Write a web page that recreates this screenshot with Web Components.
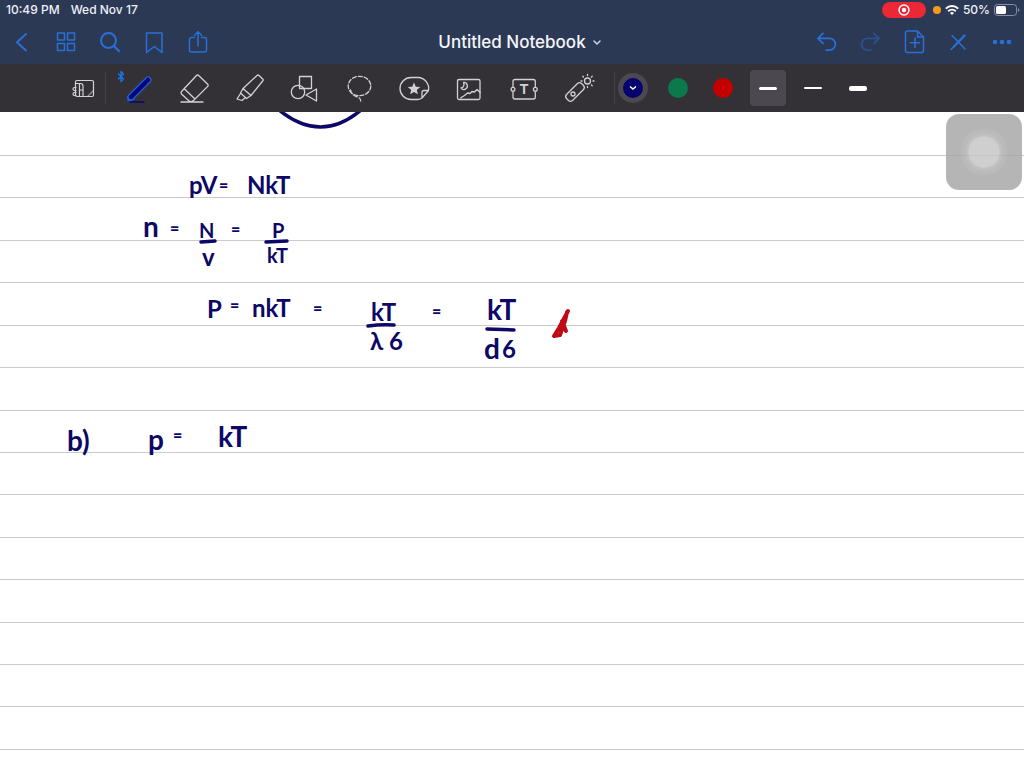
<!DOCTYPE html>
<html lang="en">
<head>
<meta charset="utf-8">
<meta name="viewport" content="width=device-width, initial-scale=1">
<title>Untitled Notebook</title>
<style>
    :root {
        --nav-color: #2c3955;
        --tint-color: #2870d8;
        --tools-color: #333136;
        --tools-selected: #4b494f;
        --ink-color: #0d0867;
    }
    body {
        margin: 0;
        font-family: Inter, "Liberation Sans", sans-serif;
    }
</style>
</head>
<body>
<notebook-app></notebook-app>

<script>
// every icon is drawn on a 44x44 grid
const icons = {
    back: '<path d="M26 14l-9 8.3 9 8.2"/>',
    grid: '<path d="M13.5 13h7v7h-7zM23.5 13h7v7h-7zM13.5 23.5h7v7h-7zM23.5 23.5h7v7h-7z"/>',
    search: '<circle cx="20.5" cy="20.5" r="7.5"/><path d="M26 26l5 5" stroke-width="2.2"/>',
    bookmark: '<path d="M14.5 13h15.5v19.5l-7.700-6-7.800 6z"/>',
    share: '<path d="M18.5 17.5h-3a2 2 0 0 0-2 2v10.500a2 2 0 0 0 2 2h13a2 2 0 0 0 2-2V19.500a2 2 0 0 0-2-2h-3M22 26V12M18.500 15.300L22 11.800l3.500 3.500"/>',
    undo: '<path d="M19 13.300l-5 5 5 5M14 18.300h11.500a5.900 5.900 0 0 1 0 11.800H22"/>',
    redo: '<path d="M26 13.300l5 5-5 5M31 18.300H19.500a5.900 5.900 0 0 0 0 11.800H23"/>',
    addpage: '<path d="M15.5 11h10l6 6v13.500a2 2 0 0 1-2 2h-14a2 2 0 0 1-2-2V13a2 2 0 0 1 2-2zM25.500 11v6h6M23 18v9.500M18.300 22.700h9.400"/>',
    pencross: '<path d="M16 15.500l13 13.500"/><path d="M18 26.500L28.500 15.500" stroke-width="2.4"/><path d="M15 29.500l3-3"/>',
    more: '<g fill="currentColor" stroke="none"><circle cx="15" cy="22" r="2.3"/><circle cx="22" cy="22" r="2.3"/><circle cx="29" cy="22" r="2.3"/></g>',
    readonly: '<rect x="14.5" y="14.500" width="18" height="16" rx="1.5"/><path d="M15 17.500h4.500a2.500 2.500 0 0 1 2.500 2.500v10.500M18.500 18v12M18.500 24H22"/><path d="M32 25l-5.500 5.500" opacity=".6"/><path d="M15 21.500h-1.500a1.500 1.500 0 0 0 0 3H15M15 26.500h-1.500a1.500 1.500 0 0 0 0 3H15"/>',
    pen: '<path d="M14.5 31.500L32 14" stroke="#1c5fd8" stroke-width="7"/><path d="M12 35l2-6 4 4z" fill="#1c5fd8" stroke="#1c5fd8"/><path d="M15 31L29.500 16.500M31.500 14.500l.5-.5" stroke="#090477" stroke-width="4.500"/><path d="M14 36h14" stroke="#090477"/><path d="M2.500 8l5 5-2.500 2.500v-10L7.500 8l-5 5" stroke="#1579ef"/>',
    eraser: '<path d="M25.500 9.500a1.500 1.500 0 0 1 2.200 0l9 8.700a1.500 1.500 0 0 1 0 2.200L23 34a4 4 0 0 1-5.500.5l-7-6.500a2 2 0 0 1 0-2.500zM13 22.500L24 33M10 36h22"/>',
    marker: '<path d="M31 9.500a1.500 1.500 0 0 1 2 0l3.700 3.500a1.500 1.500 0 0 1 0 2L25 29.500l-8-7zM17 22.500l-2.500 4.500 6 5.500 4.500-3M14.500 27.500l-3.500 5.500 5 1.500 3.500-3"/>',
    shapes: '<rect x="18.5" y="10.500" width="12" height="12"/><circle cx="17" cy="26" r="6.7"/><path d="M25 29l10.500-6v12z"/>',
    lasso: '<ellipse cx="23.5" cy="20" rx="11.3" ry="9.7" stroke-dasharray="4 2"/><path d="M14.500 24c1 5 4.500 6 7 7s3 2 3.200 4" stroke-dasharray="4 2"/>',
    sticker: '<path d="M20 11.500h7a11 11 0 0 1 10.500 13l-6.500 7.500a9 9 0 0 1-4 1.500h-7a11 11 0 0 1 0-22zM31 32v-5.500a2 2 0 0 1 2-2h4.500"/><path d="M23 16.500l1.800 4.200 4.400.3-3.400 2.900 1.100 4.300-3.900-2.300-3.900 2.300 1.100-4.300-3.400-2.900 4.400-.3z" fill="currentColor" stroke="none"/>',
    image: '<rect x="11.5" y="13.500" width="22.5" height="20" rx="1.5"/><path d="M17.500 16.500a3.500 3.500 0 1 1-2.500 5.500 3.700 3.700 0 0 0 2.500-5.500zM14.500 32l4-2.500 3-2.500 2.500.5 2-2 2.500.5 2.500-2.500 3.200 3"/>',
    text: '<path d="M12 20.500v-5a2 2 0 0 1 2-2h18.300a2 2 0 0 1 2 2v5M12 26v5a2 2 0 0 0 2 2h18.300a2 2 0 0 0 2-2v-5"/><circle cx="12" cy="23.3" r="1.9"/><circle cx="34.3" cy="23.3" r="1.9"/><text x="23" y="28" font-size="14" font-weight="700" text-anchor="middle" fill="currentColor" stroke="none">T</text>',
    laser: '<path d="M10.500 28.500L21.500 17.500a3 3 0 0 1 4 0l2 2a3 3 0 0 1 0 4L16.500 34.500a3 3 0 0 1-4 0l-2-2a3 3 0 0 1 0-4z"/><circle cx="17" cy="28" r="2"/><circle cx="31.5" cy="15" r="3"/><path d="M31.500 9.500v-1M31.500 21.500v-1M26 15h-1M38 15h-1M27.500 11l-.7-.7M35.500 19l.7.7M35.500 11l.7-.7"/>'
}

class NotebookIcon extends HTMLElement {
    constructor() {
        super()
        this.attachShadow({ mode: 'open' })
    }

    connectedCallback() {
        this.shadowRoot.innerHTML = `
            <style>
                :host { display: block; width: 44px; height: 44px; }
                svg { display: block; fill: none; stroke: currentColor; stroke-linecap: round; stroke-linejoin: round; }
            </style>
            <svg width="44" height="44" viewBox="0 0 44 44" stroke-width="${this.getAttribute('weight') || 1.5}" aria-hidden="true">${icons[this.getAttribute('name')]}</svg>
        `
    }
}

class StatusBar extends HTMLElement {
    constructor() {
        super()
        this.attachShadow({ mode: 'open' }).innerHTML = `
            <style>
                :host {
                    display: flex;
                    justify-content: space-between;
                    align-items: center;
                    height: 20px;
                    padding: 0 4px 0 6px;
                    color: #eef1f8;
                    font-size: 12px;
                    font-weight: 500;
                    line-height: 20px;
                }
                div { display: flex; align-items: center; }
                .left { gap: 11px; }
                .right { gap: 4px; }
                svg { display: block; }
                .rec {
                    width: 44px;
                    height: 16px;
                    border-radius: 8px;
                    background: #ec2736;
                    justify-content: center;
                    margin-right: 3px;
                }
                .mic { width: 8px; height: 8px; border-radius: 50%; background: #f59a1b; }
            </style>
            <div class="left"><span>10:49 PM</span><span>Wed Nov 17</span></div>
            <div class="right">
                <div class="rec">
                    <svg width="12" height="12" viewBox="0 0 12 12"><circle cx="6" cy="6" r="5" fill="none" stroke="#fff" stroke-width="1.4"/><circle cx="6" cy="6" r="2.2" fill="#fff"/></svg>
                </div>
                <span class="mic"></span>
                <svg width="14" height="10" viewBox="0 0 14 10" fill="none" stroke="#fff" stroke-width="2"><path d="M.8 3.600a9 9 0 0 1 12.400 0M3.200 6.200a5.500 5.500 0 0 1 7.600 0"/><path d="M7 10L5 7.900a3 3 0 0 1 4 0z" fill="#fff" stroke="none"/></svg>
                <span>50%</span>
                <svg width="26" height="12" viewBox="0 0 26 12"><rect x=".5" y=".5" width="22" height="11" rx="3" fill="none" stroke="#8790a4"/><rect x="2" y="2" width="10" height="8" rx="1.5" fill="#fff"/><path d="M24 4v4c2-1 2-3 0-4z" fill="#8790a4"/></svg>
            </div>
        `
    }
}

class NavBar extends HTMLElement {
    constructor() {
        super()
        this.attachShadow({ mode: 'open' }).innerHTML = `
            <style>
                :host {
                    display: grid;
                    grid-template-columns: 1fr auto 1fr;
                    align-items: center;
                    height: 44px;
                    color: var(--tint-color);
                }
                nav { display: flex; }
                nav:last-child { justify-content: flex-end; }
                button {
                    display: flex;
                    align-items: center;
                    padding: 0;
                    border: 0;
                    background: none;
                    color: inherit;
                    font: inherit;
                }
                button:disabled { opacity: 0.45; }
                .title {
                    gap: 6px;
                    padding-left: 16px;
                    color: #f4f6fb;
                    font-size: 17px;
                    font-weight: 500;
                    line-height: 24px;
                }
            </style>
            <nav>
                <button aria-label="Back"><notebook-icon name="back" weight="2"></notebook-icon></button>
                <button aria-label="Thumbnails"><notebook-icon name="grid"></notebook-icon></button>
                <button aria-label="Search"><notebook-icon name="search" weight="2"></notebook-icon></button>
                <button aria-label="Bookmark"><notebook-icon name="bookmark"></notebook-icon></button>
                <button aria-label="Share"><notebook-icon name="share"></notebook-icon></button>
            </nav>
            <button class="title">
                <slot></slot>
                <svg width="10" height="8" viewBox="0 0 10 8" fill="none" stroke="#c9d3e8" stroke-width="1.5" stroke-linecap="round" aria-hidden="true"><path d="M2 3l3 3 3-3"/></svg>
            </button>
            <nav>
                <button aria-label="Undo"><notebook-icon name="undo" weight="1.7"></notebook-icon></button>
                <button aria-label="Redo" disabled><notebook-icon name="redo" weight="1.7"></notebook-icon></button>
                <button aria-label="Add page"><notebook-icon name="addpage"></notebook-icon></button>
                <button aria-label="Stop editing"><notebook-icon name="pencross"></notebook-icon></button>
                <button aria-label="More"><notebook-icon name="more"></notebook-icon></button>
            </nav>
        `
    }
}

class ToolBar extends HTMLElement {
    constructor() {
        super()
        this.attachShadow({ mode: 'open' }).innerHTML = `
            <style>
                :host {
                    display: flex;
                    align-items: center;
                    height: 48px;
                    padding-left: 61px;
                    background: var(--tools-color);
                    color: #d2d1d4;
                }
                button {
                    display: flex;
                    align-items: center;
                    justify-content: center;
                    padding: 0;
                    border: 0;
                    background: none;
                    color: inherit;
                }
                .sep { width: 1px; height: 32px; background: #434147; }
                .tools { display: flex; padding: 0 9px 0 4px; }
                .tools button { width: 55px; }
                .presets { display: flex; gap: 9px; }
                .presets button { width: 36px; height: 36px; border-radius: 4px; }
                .dot {
                    display: flex;
                    width: 20px;
                    height: 20px;
                    border-radius: 50%;
                    background: var(--dot);
                }
                .dot.on { border: 5px solid var(--tools-selected); }
                .dot svg { margin: auto; }
                .width.on { background: var(--tools-selected); }
                .width i { width: 18px; height: var(--size); border-radius: 2px; background: #fff; }
            </style>
            <button aria-label="Read-only mode"><notebook-icon name="readonly" weight="1.2"></notebook-icon></button>
            <span class="sep"></span>
            <div class="tools"></div>
            <span class="sep"></span>
            <div class="presets">
                <button aria-label="Navy" aria-pressed="true"><span class="dot on" style="--dot: #06006e"><svg width="8" height="6" viewBox="0 0 8 6" fill="none" stroke="#fff" stroke-width="1.5"><path d="M1 1.500l3 2.500 3-2.500"/></svg></span></button>
                <button aria-label="Green"><span class="dot" style="--dot: #0a7a4b"></span></button>
                <button aria-label="Red"><span class="dot" style="--dot: #c40000"></span></button>
                <button class="width on" aria-label="Medium stroke" aria-pressed="true"><i style="--size: 3px"></i></button>
                <button class="width" aria-label="Thin stroke"><i style="--size: 2px"></i></button>
                <button class="width" aria-label="Thick stroke"><i style="--size: 5px"></i></button>
            </div>
        `
        const tools = this.shadowRoot.querySelector('.tools')
        for (const name of ['pen', 'eraser', 'marker', 'shapes', 'lasso', 'sticker', 'image', 'text', 'laser'])
            tools.innerHTML += `<button aria-label="${name}"><notebook-icon name="${name}" weight="1.3"></notebook-icon></button>`
    }
}

// ruled paper with the notes placed freely on top
class NotePage extends HTMLElement {
    constructor() {
        super()
        this.attachShadow({ mode: 'open' }).innerHTML = `
            <style>
                :host { display: block; position: relative; overflow: hidden; background: #fff; }
                .rules {
                    position: absolute;
                    inset: 0;
                    display: flex;
                    flex-direction: column;
                    justify-content: space-between;
                    padding: 43px 0 18px;
                }
                .rules i { height: 1px; background: #cacacc; }
                svg { position: absolute; left: 0; top: 0; overflow: visible; }
                text { fill: var(--ink-color); font-family: Lato, "Open Sans", sans-serif; font-size: 24px; font-weight: 700; }
                .big { font-size: 28px; }
                .small { font-size: 20px; }
                .sign { font-size: 16px; font-weight: 900; }
                .ink { fill: none; stroke: var(--ink-color); stroke-width: 3.5; stroke-linecap: round; stroke-linejoin: round; }
                .red { stroke: #bd0a14; stroke-width: 4; }
            </style>
            <div class="rules">${'<i></i>'.repeat(15)}</div>
            <svg width="1024" height="656">
                <path class="ink" d="M279-2q42 34 82 0"/>

                <text x="189" y="82">pV</text>
                <text class="sign" x="219" y="79">=</text>
                <text x="247" y="82">NkT</text>

                <text class="big" x="143" y="125">n</text>
                <text class="sign" x="170" y="122">=</text>
                <text class="small" x="199" y="126">N</text>
                <path class="ink" d="M201 130l14-1"/>
                <text x="202" y="154">v</text>
                <text class="sign" x="231" y="123">=</text>
                <text class="small" x="272" y="126">P</text>
                <path class="ink" d="M266 130l21-1"/>
                <text class="small" x="267" y="151">kT</text>

                <text x="207" y="206">P</text>
                <text class="sign" x="230" y="199">=</text>
                <text x="252" y="205">nkT</text>
                <text class="sign" x="313" y="202">=</text>
                <text x="371" y="209">kT</text>
                <path class="ink" d="M368 214q14-2 26-1"/>
                <text x="370" y="238">λ</text>
                <text x="389" y="238">6</text>
                <text class="sign" x="432" y="205">=</text>
                <text class="big" x="487" y="208">kT</text>
                <path class="ink" d="M487 217l27 1"/>
                <text class="big" x="484" y="247">d</text>
                <text x="502" y="246">6</text>
                <path class="ink red" d="M568 199l-9 17-5 8 6-1 5-14 2-9M562 209l4 10"/>

                <text class="big" x="67" y="339">b)</text>
                <text class="big" x="148" y="338">p</text>
                <text class="sign" x="173" y="329">=</text>
                <text class="big" x="218" y="335">kT</text>
            </svg>
        `
    }
}

class AssistiveTouch extends HTMLElement {
    constructor() {
        super()
        this.attachShadow({ mode: 'open' }).innerHTML = `
            <style>
                :host { position: absolute; right: 2px; top: 114px; }
                button {
                    display: block;
                    width: 76px;
                    height: 76px;
                    border: 0;
                    border-radius: 13px;
                    background: radial-gradient(circle, #cecece 15px, #bdbdbd 16px, #b7b7b7 19px, #b2b2b2 20px, #b2b2b2 23px, #acacac 24px);
                    opacity: 0.8;
                    filter: brightness(0.95);
                }
            </style>
            <button aria-label="AssistiveTouch"></button>
        `
    }
}

class NotebookApp extends HTMLElement {
    constructor() {
        super()
        this.attachShadow({ mode: 'open' }).innerHTML = `
            <style>
                :host { display: flex; flex-direction: column; position: relative; min-height: 100vh; }
                header { background: var(--nav-color); }
                note-page { flex: 1; }
            </style>
            <header>
                <status-bar></status-bar>
                <nav-bar>Untitled Notebook</nav-bar>
                <tool-bar></tool-bar>
            </header>
            <note-page></note-page>
            <assistive-touch></assistive-touch>
        `
    }
}

customElements.define('notebook-icon', NotebookIcon)
customElements.define('status-bar', StatusBar)
customElements.define('nav-bar', NavBar)
customElements.define('tool-bar', ToolBar)
customElements.define('note-page', NotePage)
customElements.define('assistive-touch', AssistiveTouch)
customElements.define('notebook-app', NotebookApp)
</script>
</body>
</html>
